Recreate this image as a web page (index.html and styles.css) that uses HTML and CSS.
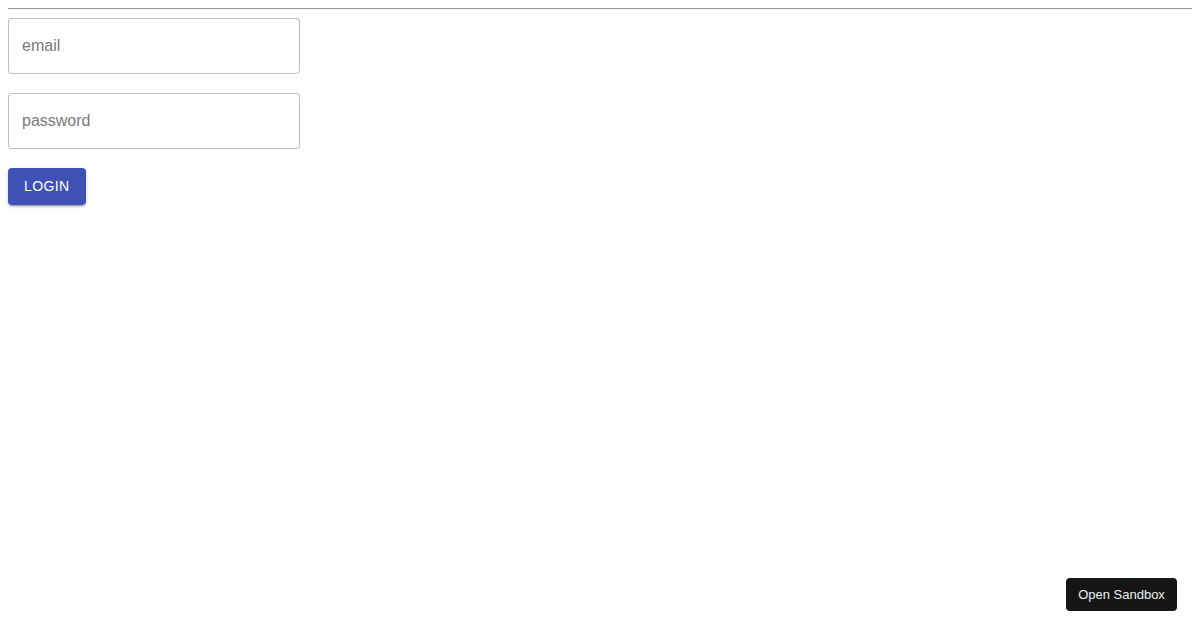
FILE: index.html
```html
<!DOCTYPE html>
<html>
<head>
<meta charset="utf-8">
<link rel="stylesheet" href="styles.css">
</head>
<body>
<div class="rule"></div>
<form class="login">
  <div class="field"><input class="input" type="text" placeholder="email"></div>
  <div class="field"><input class="input" type="password" placeholder="password"></div>
  <button class="btn" type="button">Login</button>
</form>
<a class="sandbox">Open Sandbox</a>
</body>
</html>
```
FILE: styles.css
```css
html, body { margin: 0; padding: 0; background: #fff; }
body {
  padding: 8px;
  font-family: "Liberation Sans", Arial, sans-serif;
}
.rule {
  height: 0;
  border-top: 1px solid #9a9a9a;
  border-bottom: 1px solid #eeeeee;
}
.login {
  display: flex;
  flex-direction: column;
  align-items: flex-start;
  gap: 19px;
  margin-top: 8px;
}
.field { width: 292px; }
.input {
  box-sizing: border-box;
  width: 292px;
  height: 56px;
  padding: 0 13px;
  border: 1px solid rgba(0,0,0,0.26);
  border-radius: 4px;
  font-family: "Liberation Sans", Arial, sans-serif;
  font-size: 16px;
  color: #333;
  outline: none;
  background: #fff;
}
.input::placeholder { color: #7a7a7a; opacity: 1; }
.btn {
  box-sizing: border-box;
  height: 37px;
  padding: 0 16px 1px;
  border: none;
  border-radius: 4px;
  background: #3f51b5;
  color: #fff;
  font-family: "Liberation Sans", Arial, sans-serif;
  font-size: 14px;
  letter-spacing: 0.4px;
  text-transform: uppercase;
  box-shadow: 0 3px 1px -2px rgba(0,0,0,0.2), 0 2px 2px 0 rgba(0,0,0,0.14), 0 1px 5px 0 rgba(0,0,0,0.12);
  cursor: pointer;
}
.sandbox {
  position: fixed;
  right: 23px;
  bottom: 19px;
  box-sizing: border-box;
  width: 111px;
  height: 33px;
  display: flex;
  align-items: center;
  justify-content: center;
  background: #151515;
  color: #f0f0f0;
  border-radius: 4px;
  font-family: "Liberation Sans", Arial, sans-serif;
  font-size: 13px;
}
```
